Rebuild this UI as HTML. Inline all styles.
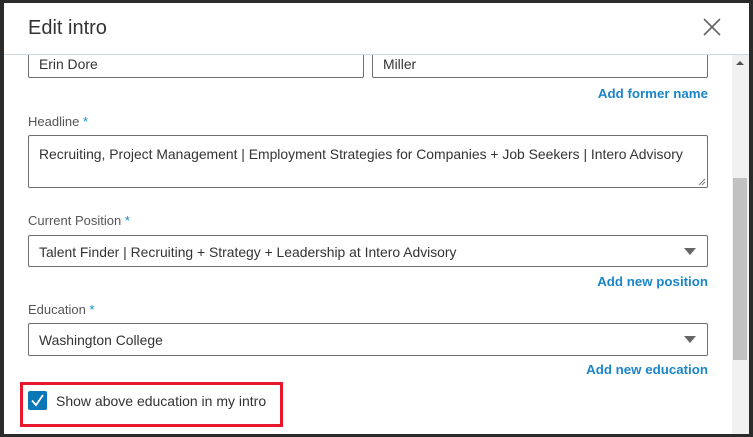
<!DOCTYPE html>
<html><head><meta charset="utf-8"><style>
*{margin:0;padding:0;box-sizing:border-box}
html,body{width:753px;height:437px;overflow:hidden;background:#2b2b2b;font-family:"Liberation Sans",sans-serif}
.m{position:absolute;left:4px;top:3px;width:745px;height:431px;background:#fff}
.a{position:absolute}
.t{left:24px;top:14px;font-size:20px;color:#333;font-weight:300}
.div{left:0;top:51px;width:745px;height:1px;background:#cfd6dc}
.inp{border:1px solid #6e6e6e;border-radius:2px;background:#fff;font-size:13.9px;color:#333;padding-left:10px}
.lbl{font-size:13px;color:#555}
.lbl b{color:#0a8fc7;font-weight:normal}
.lnk{font-size:13.3px;font-weight:bold;color:#1a85c8;text-align:right}
.arr{position:absolute;right:11px;top:12px;width:0;height:0;border-left:6px solid transparent;border-right:6px solid transparent;border-top:7px solid #666}
</style></head><body>
<div class="m">
<div class="a" style="left:728px;top:52px;width:17px;height:379px;background:#f1f1f1"></div>
<div class="a" style="left:732px;top:58px;width:0;height:0;border-left:4px solid transparent;border-right:4px solid transparent;border-bottom:4px solid #505050"></div>
<div class="a" style="left:729px;top:175px;width:14px;height:182px;background:#c1c1c1"></div>
<div class="a inp" style="left:24px;top:45px;width:336px;height:30px;padding-top:7px">Erin Dore</div>
<div class="a inp" style="left:368px;top:45px;width:336px;height:30px;padding-top:7px">Miller</div>
<div class="a" style="left:0;top:0;width:728px;height:51px;background:#fff"></div>
<div class="a t">Edit intro</div>
<svg class="a" style="left:699px;top:15px" width="18" height="18" viewBox="0 0 18 18"><path d="M1 1L17 17M17 1L1 17" stroke="#666" stroke-width="1.6"/></svg>
<div class="a div"></div>
<div class="a lnk" style="left:400px;top:83px;width:304px">Add former name</div>
<div class="a lbl" style="left:24px;top:111px">Headline <b>*</b></div>
<div class="a inp" style="left:24px;top:132px;width:680px;height:53px;padding-top:10px">Recruiting, Project Management | Employment Strategies for Companies + Job Seekers | Intero Advisory
<svg class="a" style="right:1px;bottom:1px" width="8" height="8"><path d="M7 1L1 7M7 4L4 7" stroke="#777" stroke-width="1"/></svg></div>
<div class="a lbl" style="left:24px;top:210px">Current Position <b>*</b></div>
<div class="a inp" style="left:24px;top:232px;width:680px;height:32px;padding-top:8px">Talent Finder | Recruiting + Strategy + Leadership at Intero Advisory<div class="arr"></div></div>
<div class="a lnk" style="left:400px;top:271px;width:304px">Add new position</div>
<div class="a lbl" style="left:24px;top:299px">Education <b>*</b></div>
<div class="a inp" style="left:24px;top:320px;width:680px;height:33px;padding-top:8px">Washington College<div class="arr"></div></div>
<div class="a lnk" style="left:400px;top:359px;width:304px">Add new education</div>
<div class="a" style="left:24px;top:388px;width:19px;height:19px;background:#0a77b6;border-radius:2px"></div>
<svg class="a" style="left:24px;top:388px" width="19" height="19"><path d="M4 9.5L8 14L15 4" stroke="#fff" stroke-width="1.8" fill="none"/></svg>
<div class="a" style="left:52px;top:390px;font-size:14px;color:#333">Show above education in my intro</div>
<div class="a" style="left:16px;top:379px;width:263px;height:45px;border:3px solid #e8172b"></div>
</div>
</body></html>
